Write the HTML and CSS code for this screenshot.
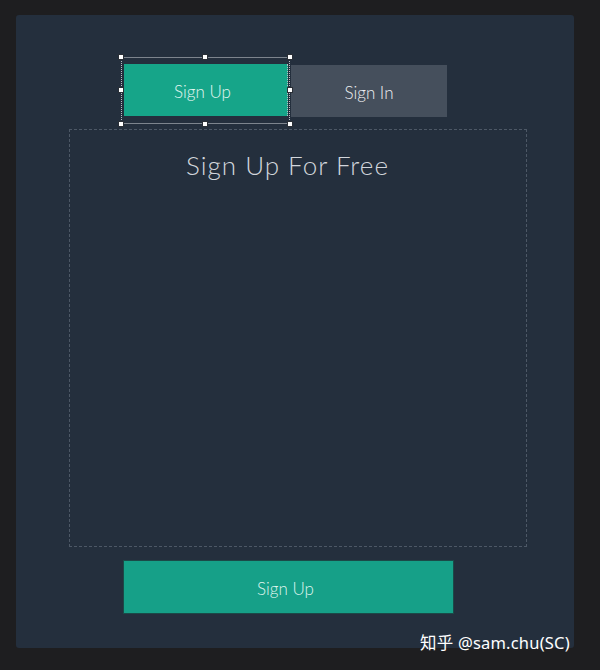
FILE: index.html
```html
<!DOCTYPE html>
<html>
<head>
<meta charset="utf-8">
<link rel="stylesheet" href="styles.css">
</head>
<body>
<div class="panel">
  <div class="tabs">
    <div class="selected">
      <div class="tab tab-active">Sign Up</div>
      <span class="handle h-tl"></span><span class="handle h-tm"></span><span class="handle h-tr"></span>
      <span class="handle h-ml"></span><span class="handle h-mr"></span>
      <span class="handle h-bl"></span><span class="handle h-bm"></span><span class="handle h-br"></span>
    </div>
    <div class="tab tab-idle">Sign In</div>
  </div>
  <div class="form-box">
    <h1 class="title">Sign Up For Free</h1>
  </div>
  <div class="submit">Sign Up</div>
</div>
<div class="watermark">知乎 @sam.chu(SC)</div>
</body>
</html>
```

FILE: styles.css
```css
html, body {
  margin: 0;
  padding: 0;
}
body {
  width: 600px;
  height: 670px;
  background: #1e1e20;
  font-family: "Lato", "Liberation Sans", sans-serif;
  position: relative;
  overflow: hidden;
}
.panel {
  margin: 15px 0 0 16px;
  width: 558px;
  height: 633px;
  background: #242f3d;
  border-radius: 3px;
  box-sizing: border-box;
  padding-top: 42px;
}
.tabs {
  display: flex;
  align-items: center;
  margin-left: 105px;
  height: 67px;
}
.selected {
  position: relative;
  width: 169px;
  height: 67px;
  box-sizing: border-box;
  border-top: 1px solid #7d848d;
  border-bottom: 1px solid #7d848d;
  border-left: 1px dotted #b9bec4;
  border-right: 1px dotted #b9bec4;
  padding: 6px 1px 6px 2px;
}
.tab {
  height: 52px;
  display: flex;
  align-items: center;
  justify-content: center;
  font-size: 17px;
  font-weight: 300;
  padding-top: 3px;
  box-sizing: border-box;
}
.tab-active {
  background: #16a589;
  color: #e2f6f0;
  width: 164px;
  padding-right: 6px;
  border-right: 1px dotted #b9bec4;
}
.tab-idle {
  background: #454f5c;
  color: #eceef1;
  width: 156px;
  margin-left: 1px;
}
.handle {
  position: absolute;
  width: 6px;
  height: 6px;
  background: #ffffff;
  border: 1px solid #2a2f36;
  box-sizing: border-box;
}
.h-tl { left: -4px; top: -4px; }
.h-tm { left: 80px; top: -4px; }
.h-tr { right: -4px; top: -4px; }
.h-ml { left: -4px; top: 29px; }
.h-mr { right: -4px; top: 29px; }
.h-bl { left: -4px; bottom: -4px; }
.h-bm { left: 80px; bottom: -4px; }
.h-br { right: -4px; bottom: -4px; }
.form-box {
  margin: 5px 0 0 53px;
  width: 458px;
  height: 418px;
  box-sizing: border-box;
  border: 1px dashed #4d5866;
}
.title {
  margin: 19px 0 0 0;
  padding-right: 21px;
  text-align: center;
  font-weight: 300;
  font-size: 26px;
  color: #d2d6dc;
  letter-spacing: 1px;
}
.submit {
  margin: 14px 0 0 108px;
  width: 329px;
  height: 52px;
  background: #16a088;
  color: #def4ed;
  display: flex;
  align-items: center;
  justify-content: center;
  font-size: 17px;
  font-weight: 300;
  padding-top: 3px;
  box-sizing: border-box;
  padding-right: 6px;
  box-shadow: 0 0 0 1px #1b4a48;
}
.watermark {
  position: absolute;
  left: 420px;
  top: 630px;
  color: #ffffff;
  font-family: "Noto Sans", "Noto Sans CJK SC", sans-serif;
  font-size: 16.5px;
  letter-spacing: 0.2px;
}
```
